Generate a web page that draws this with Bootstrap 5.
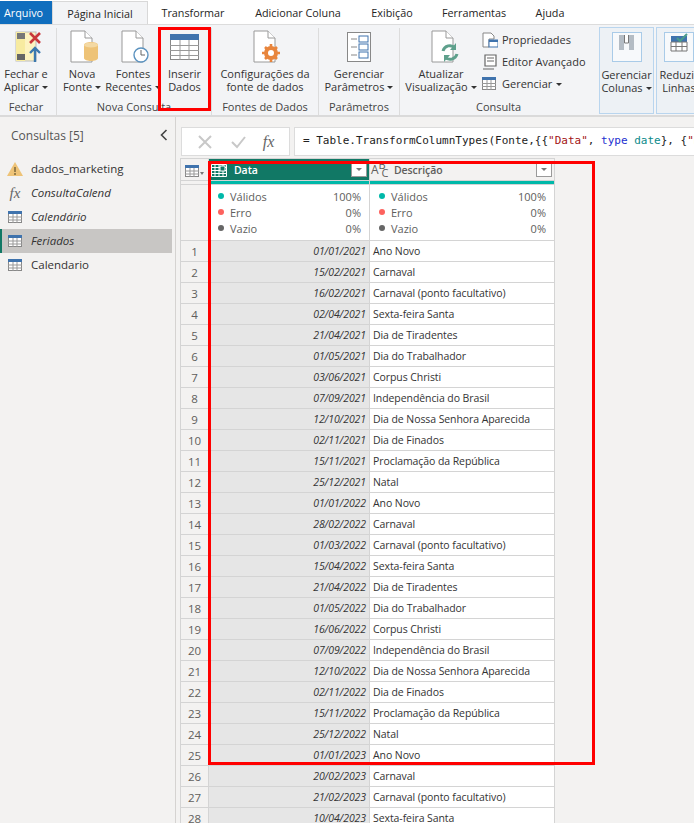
<!DOCTYPE html>
<html lang="pt"><head><meta charset="utf-8"><title>Power Query</title>
<link href="https://cdn.jsdelivr.net/npm/bootstrap@5.3.0/dist/css/bootstrap.min.css" rel="stylesheet">
<style>
html,body{height:823px;overflow:hidden}
body{width:694px;background:#f3f2f1;font-family:"Open Sans","Noto Sans",sans-serif;font-size:11px;color:#333;position:relative}
.pq-tabs{height:24px;background:#fff;align-items:stretch;font-size:10.8px;color:#252423}
.pq-tab{display:flex;align-items:center;justify-content:center;flex:none;padding-top:3px}
.pq-file{width:52px;background:#106ebe;color:#fff;margin-top:1px;padding:2px 5px 0 0}
.pq-active{width:96px;background:#f3f4f6;border:1px solid #d8d8d8;border-bottom:0;margin-top:1px;padding-top:2px}
.pq-ribbon{height:93px;background:#f3f4f6;border-top:1px solid #dcdcdc;border-bottom:2px solid #dadada;overflow:hidden;padding-top:3px}
.pq-group{flex:none;border-right:1px solid #dcdcdc;height:87px;display:flex;flex-direction:column;position:relative}
.pq-items{display:flex;flex:1;justify-content:space-around}
.pq-item{display:flex;flex-direction:column;align-items:center;text-align:center;line-height:13px;color:#333;flex:none;white-space:nowrap}
.pq-ico{height:36px;margin-top:1px;margin-bottom:2px;display:flex;align-items:center;justify-content:center}
.pq-sh{margin-left:4px}
.pq-sh2{margin-left:8px}
.pq-label{height:16px;text-align:center;color:#444;line-height:16px;white-space:nowrap;margin-top:auto}
.pq-caret{display:inline-block;border-left:3px solid transparent;border-right:3px solid transparent;border-top:3px solid #333;vertical-align:2px;margin-left:3px}
.pq-hi{flex:none;background:#edf1f5;border:1px solid #b9d5ee;margin-left:2px;height:87px;margin-top:-1px;overflow:hidden}
.pq-hi .pq-ico{margin-top:1px;margin-bottom:3px}
.pq-mini{display:flex;align-items:center;gap:4px;height:22px;color:#333;white-space:nowrap}
.pq-mini .pq-caret{margin-left:0}
.pq-main{height:706px}
.pq-side{width:176px;flex:none;border-right:1px solid #d5d3d1;position:relative}
.pq-side-head{font-size:12px;color:#555;padding:10px 0 0 11px;height:40px}
.pq-q{height:24px;display:flex;align-items:center;width:172px;font-size:11.5px;padding-left:7px;gap:8px;color:#333}
.pq-q.pq-sel{background:#c8c6c4;border-left:2px solid #117865;padding-left:5px}
.pq-q em{font-style:italic}
.pq-back{position:absolute;right:7px;top:12px}
.pq-work{flex:1;padding:10px 0 0 5px;min-width:0;overflow:hidden}
.pq-fbar{height:29px;gap:4px;margin-bottom:2px}
.pq-fbtn{width:109px;background:#fff;border:1px solid #dcdcdc;flex:none;display:flex;align-items:center;justify-content:space-around;padding:0 6px}
.pq-fx{flex:1;background:#fff;border-top:1px solid #dcdcdc;border-bottom:1px solid #dcdcdc;border-left:1px solid #dcdcdc;font-family:"DejaVu Sans Mono","Liberation Mono",monospace;font-size:11px;line-height:26px;padding-left:8px;white-space:nowrap;overflow:hidden;color:#222}
.pq-kw{color:#1c2fd0}.pq-ty{color:#0b8a8a}.pq-st{color:#a31515}
.pq-table{table-layout:fixed;border-collapse:collapse;width:374px;margin:0 0 0 -1px;background:#fff}
.pq-table td,.pq-table th{border:1px solid #d4d4d4;padding:0 3px;height:21px;line-height:19px;font-size:10.5px;letter-spacing:-.08px;font-weight:400;white-space:nowrap;overflow:hidden;color:#333}
.pq-n{background:#f3f2f1;text-align:center;color:#605e5c!important;font-size:11.5px!important;padding:0!important}
.pq-d{background:#e6e6e6;text-align:right;font-style:italic}
.pq-table thead th{height:22px;padding:0;position:relative;vertical-align:middle}
.pq-th1{background:#117865;color:#fff!important;font-weight:600!important}
.pq-th2{background:#f3f2f1;color:#605e5c!important;font-weight:600!important}
.pq-thc{display:flex;align-items:center;height:21px;gap:4px;padding-top:1px}
.pq-dd{position:absolute;right:2px;top:3px;width:16px;height:15px;background:#fff;border:1px solid #9a9a9a;display:flex;align-items:center;justify-content:center}
.pq-dd i{display:block;border-left:3px solid transparent;border-right:3px solid transparent;border-top:3px solid #777}
.pq-abc{width:19px;font-weight:400;font-size:12px;line-height:1;white-space:nowrap;margin-left:1px}
.pq-abc sup{font-size:11px;top:-.45em}.pq-abc sub{font-size:11px;bottom:-.3em;margin-left:-4px}
.pq-bar td{height:4px!important;padding:0!important;background:#00b8a9;font-size:0!important;line-height:0!important;border-top:0;border-bottom:0}
.pq-bar .pq-n0,.pq-qual .pq-n0{background:#f3f2f1}
.pq-qual td{height:56px!important;padding:0!important;vertical-align:top}
.pq-qrow{display:flex;align-items:center;height:16px;padding:0 8px;gap:6px;color:#605e5c;font-size:11px;letter-spacing:0}
.pq-qrow span:last-child{margin-left:auto}
.pq-dot{width:6px;height:6px;border-radius:50%;margin-left:1px;flex:none}
.pq-qgrid{padding-top:3px}
.pq-red{position:absolute;border:3px solid #f00;pointer-events:none}
.pq-r1{left:158px;top:27px;width:53px;height:84px}
.pq-r2{left:208px;top:161px;width:387px;height:604px}
</style></head><body>
<div class="pq-tabs d-flex">
 <div class="pq-tab pq-file">Arquivo</div>
 <div class="pq-tab pq-active">Página Inicial</div>
 <div class="pq-tab" style="width:90px">Transformar</div>
 <div class="pq-tab" style="width:120px">Adicionar Coluna</div>
 <div class="pq-tab" style="width:68px">Exibição</div>
 <div class="pq-tab" style="width:96px">Ferramentas</div>
 <div class="pq-tab" style="width:56px">Ajuda</div>
</div>
<div class="pq-ribbon d-flex">
 <div class="pq-group" style="width:57px">
  <div class="pq-items pe-1"><div class="pq-item">
   <div class="pq-ico"><svg class="pq-sh" width="28" height="32" viewBox="0 0 28 32"><rect x="2" y="1" width="20" height="29" fill="#fdf3c0" stroke="#bbb"/><rect x="2" y="1" width="9" height="29" fill="#f7eba0"/><rect x="3" y="2" width="8" height="6" fill="#777"/><rect x="3" y="23" width="8" height="6" fill="#666"/><path d="M16 2l10 10M26 2L16 12" stroke="#c8373a" stroke-width="2.6"/><path d="M21 31V18M16 22l5-5 5 5" stroke="#3b79ae" stroke-width="2.4" fill="none"/></svg></div>
   <span>Fechar e<br>Aplicar<i class="pq-caret"></i></span></div></div>
  <div class="pq-label pe-1">Fechar</div>
 </div>
 <div class="pq-group" style="width:155px">
  <div class="pq-items justify-content-start"><div class="pq-item" style="width:50px">
   <div class="pq-ico"><svg class="pq-sh" width="30" height="34" viewBox="0 0 30 34"><path d="M2 1h14l7 7v24H2z" fill="#fff" stroke="#999"/><path d="M16 1v7h7" fill="#fff" stroke="#999"/><path d="M15 15c0-4 14-4 14 0v13c0 4-14 4-14 0z" fill="#eec377"/><ellipse cx="22" cy="15" rx="7" ry="2.4" fill="#f4d9a3"/></svg></div>
   <span>Nova<br>Fonte<i class="pq-caret"></i></span></div>
   <div class="pq-item" style="width:52px">
   <div class="pq-ico"><svg class="pq-sh" width="30" height="34" viewBox="0 0 30 34"><path d="M2 1h14l7 7v24H2z" fill="#fff" stroke="#999"/><path d="M16 1v7h7" fill="#fff" stroke="#999"/><circle cx="21" cy="25" r="7" fill="#fff" stroke="#5b92bf" stroke-width="1.4"/><path d="M21 20v5h4" fill="none" stroke="#666"/></svg></div>
   <span>Fontes<br>Recentes<i class="pq-caret"></i></span></div>
   <div class="pq-item" style="width:51px">
   <div class="pq-ico"><svg width="30" height="26" viewBox="0 0 30 26"><rect x=".5" y=".5" width="28" height="25" fill="#fff" stroke="#888"/><rect y="0" width="29" height="6" fill="#3f73ad"/><path d="M0 11.5h29M0 16.5h29M0 21.5h29M10 6v20M19 6v20" stroke="#999"/></svg></div>
   <span>Inserir<br>Dados</span></div></div>
  <div class="pq-label">Nova Consulta</div>
 </div>
 <div class="pq-group" style="width:107px">
  <div class="pq-items"><div class="pq-item">
   <div class="pq-ico"><svg class="pq-sh" width="30" height="34" viewBox="0 0 30 34"><path d="M2 1h14l7 7v24H2z" fill="#fff" stroke="#999"/><path d="M16 1v7h7" fill="#fff" stroke="#999"/><circle cx="19" cy="23" r="5" fill="none" stroke="#e8853c" stroke-width="4"/><path d="M19 14v4M19 28v4M10 23h4M24 23h4M13 17l3 3M22 26l3 3M25 17l-3 3M16 26l-3 3" stroke="#e8853c" stroke-width="2.6"/></svg></div>
   <span>Configurações da<br>fonte de dados</span></div></div>
  <div class="pq-label">Fontes de Dados</div>
 </div>
 <div class="pq-group" style="width:81px">
  <div class="pq-items"><div class="pq-item">
   <div class="pq-ico"><svg width="24" height="30" viewBox="0 0 24 30"><rect x=".5" y=".5" width="23" height="29" fill="#fff" stroke="#888"/><path d="M4 7h6M4 15h6M4 23h6" stroke="#888"/><rect x="12" y="4" width="9" height="6" fill="#fff" stroke="#3f73ad"/><rect x="12" y="12" width="9" height="6" fill="#fff" stroke="#3f73ad"/><rect x="12" y="20" width="9" height="6" fill="#fff" stroke="#3f73ad"/></svg></div>
   <span>Gerenciar<br>Parâmetros<i class="pq-caret"></i></span></div></div>
  <div class="pq-label">Parâmetros</div>
 </div>
 <div class="pq-group" style="width:197px;border-right:0">
  <div class="pq-items justify-content-start"><div class="pq-item" style="width:82px">
   <div class="pq-ico"><svg class="pq-sh2" width="30" height="34" viewBox="0 0 30 34"><path d="M2 1h14l7 7v24H2z" fill="#fff" stroke="#999"/><path d="M16 1v7h7" fill="#fff" stroke="#999"/><path d="M13 21a7 7 0 0 1 12-3" fill="none" stroke="#5ea08c" stroke-width="3"/><path d="M27 24a7 7 0 0 1-12 3" fill="none" stroke="#5ea08c" stroke-width="3"/><path d="M26 13v7h-6zM14 32v-7h6z" fill="#5ea08c"/></svg></div>
   <span>Atualizar<br>Visualização<i class="pq-caret"></i></span></div>
   <div class="d-flex flex-column" style="padding-top:1px">
    <div class="pq-mini"><svg width="16" height="16" viewBox="0 0 16 16"><path d="M1 1h8l3 3v3H7v8H1z" fill="#fff" stroke="#888"/><rect x="7" y="8" width="9" height="7" fill="#fff" stroke="#3f73ad"/><rect x="7" y="8" width="9" height="2" fill="#3f73ad"/></svg>Propriedades</div>
    <div class="pq-mini"><svg width="16" height="16" viewBox="0 0 16 16"><path d="M3 1h11v11H3zM1 15h11" fill="#fff" stroke="#666" stroke-width="1.2"/><path d="M5 4h7M5 7h7" stroke="#666"/></svg>Editor Avançado</div>
    <div class="pq-mini"><svg width="16" height="14" viewBox="0 0 16 14"><rect x=".5" y=".5" width="13" height="12" fill="#fff" stroke="#888"/><rect width="14" height="3" fill="#3f73ad"/><path d="M0 6.5h14M0 9.5h14M5 3v10M9 3v10" stroke="#999"/></svg>Gerenciar<i class="pq-caret"></i></div>
   </div></div>
  <div class="pq-label">Consulta</div>
 </div>
 <div class="pq-hi pq-item" style="width:55px">
   <div class="pq-ico"><svg width="30" height="30" viewBox="0 0 30 30"><rect x=".5" y=".5" width="29" height="29" fill="#f7f9fb" stroke="#a9cbe8"/><rect x="7" y="3" width="5" height="15" fill="#b4bcc4"/><rect x="17" y="3" width="5" height="15" fill="#b4bcc4"/><path d="M12.5 3v8h4V3" fill="#fff" stroke="#777"/></svg></div>
   <span>Gerenciar<br>Colunas<i class="pq-caret"></i></span></div>
 <div class="pq-hi pq-item" style="width:46px">
   <div class="pq-ico"><svg width="30" height="30" viewBox="0 0 30 30"><rect x=".5" y=".5" width="29" height="29" fill="#f7f9fb" stroke="#a9cbe8"/><rect x="7" y="4" width="16" height="6" fill="#3f73ad"/><path d="M7 10h16v9H7zM7 14.500h16M12 10v9M18 10v9" fill="#fff" stroke="#777"/><path d="M13 6l3 3 7-7" fill="none" stroke="#4a9c8c" stroke-width="2"/></svg></div>
   <span>Reduzir<br>Linhas</span></div>
</div>
<div class="pq-main d-flex">
 <aside class="pq-side">
  <div class="pq-side-head">Consultas [5]</div>
  <svg class="pq-back" width="8" height="12" viewBox="0 0 8 12"><path d="M6.5 1L1.5 6l5 5" fill="none" stroke="#444" stroke-width="1.6"/></svg>
  <div class="pq-q"><svg width="16" height="14" viewBox="0 0 16 14"><path d="M8 0l8 14H0z" fill="#eec377"/><path d="M8 5v5M8 11v2" stroke="#6b5a32" stroke-width="1.3"/></svg>dados_marketing</div>
  <div class="pq-q"><span style="width:16px;font-family:'Liberation Serif',serif;font-style:italic;font-size:15px;color:#666;line-height:1;text-align:center">fx</span><em>ConsultaCalend</em></div>
  <div class="pq-q"><svg width="14" height="12" viewBox="0 0 14 12" style="margin:0 1px"><rect x=".5" y=".5" width="13" height="11" fill="#fff" stroke="#888"/><rect width="14" height="3" fill="#3f73ad"/><path d="M0 6h14M0 9h14M5 3v9M9 3v9" stroke="#999"/></svg><em>Calendário</em></div>
  <div class="pq-q pq-sel"><svg width="14" height="12" viewBox="0 0 14 12" style="margin:0 1px"><rect x=".5" y=".5" width="13" height="11" fill="#fff" stroke="#888"/><rect width="14" height="3" fill="#3f73ad"/><path d="M0 6h14M0 9h14M5 3v9M9 3v9" stroke="#999"/></svg><em>Feriados</em></div>
  <div class="pq-q"><svg width="14" height="12" viewBox="0 0 14 12" style="margin:0 1px"><rect x=".5" y=".5" width="13" height="11" fill="#fff" stroke="#888"/><rect width="14" height="3" fill="#3f73ad"/><path d="M0 6h14M0 9h14M5 3v9M9 3v9" stroke="#999"/></svg>Calendario</div>
 </aside>
 <main class="pq-work">
  <div class="pq-fbar d-flex">
   <div class="pq-fbtn">
    <svg width="16" height="16" viewBox="0 0 16 16"><path d="M2 2l12 12M14 2L2 14" stroke="#c8c8c8" stroke-width="2"/></svg>
    <svg width="16" height="14" viewBox="0 0 16 14"><path d="M2 7l5 5 8-10" fill="none" stroke="#c8c8c8" stroke-width="2"/></svg>
    <span style="font-family:'Liberation Serif',serif;font-style:italic;font-size:16px;color:#666">fx</span>
   </div>
   <div class="pq-fx">= Table.TransformColumnTypes(Fonte,{{<span class="pq-st">"Data"</span>, <span class="pq-kw">type</span> <span class="pq-ty">date</span>}, {<span class="pq-st">"Descrição"</span>, <span class="pq-kw">type</span> <span class="pq-ty">text</span>}})</div>
  </div>
  <table class="pq-table">
   <colgroup><col style="width:28px"><col style="width:161px"><col style="width:185px"></colgroup>
   <thead><tr>
    <th class="pq-n"><svg width="20" height="12" viewBox="0 0 20 12"><rect x=".5" y=".5" width="13" height="11" fill="#fff" stroke="#888"/><rect width="14" height="3" fill="#3f73ad"/><path d="M0 6h14M0 9h14M5 3v9M9 3v9" stroke="#999"/><path d="M15 7h4l-2 3z" fill="#777"/></svg></th>
    <th class="pq-th1"><div class="pq-thc"><svg width="16" height="13" viewBox="0 0 16 13" style="margin-left:2px"><path d="M.5.5h15v12H.5zM.5 3.500h15M.5 6.500h15M.5 9.500h15M4 .5v12M8 .5v12M12 .5v12" fill="none" stroke="#fff"/><rect x="9" y="2" width="5" height="5" fill="#117865" stroke="#fff"/></svg><span style="margin-left:3px">Data</span></div><span class="pq-dd"><i></i></span></th>
    <th class="pq-th2"><div class="pq-thc"><span class="pq-abc">A<sup>B</sup><sub>C</sub></span><span>Descrição</span></div><span class="pq-dd"><i></i></span></th>
   </tr></thead>
   <tbody>
    <tr class="pq-bar"><td class="pq-n0"></td><td></td><td></td></tr>
    <tr class="pq-qual"><td class="pq-n0"></td>
     <td><div class="pq-qgrid"><div class="pq-qrow"><i class="pq-dot" style="background:#00b8a9"></i><span>Válidos</span><span>100%</span></div><div class="pq-qrow"><i class="pq-dot" style="background:#fd625e"></i><span>Erro</span><span>0%</span></div><div class="pq-qrow"><i class="pq-dot" style="background:#666"></i><span>Vazio</span><span>0%</span></div></div></td>
     <td><div class="pq-qgrid"><div class="pq-qrow"><i class="pq-dot" style="background:#00b8a9"></i><span>Válidos</span><span>100%</span></div><div class="pq-qrow"><i class="pq-dot" style="background:#fd625e"></i><span>Erro</span><span>0%</span></div><div class="pq-qrow"><i class="pq-dot" style="background:#666"></i><span>Vazio</span><span>0%</span></div></div></td></tr>
    <tr><td class="pq-n">1</td><td class="pq-d">01/01/2021</td><td>Ano Novo</td></tr>
    <tr><td class="pq-n">2</td><td class="pq-d">15/02/2021</td><td>Carnaval</td></tr>
    <tr><td class="pq-n">3</td><td class="pq-d">16/02/2021</td><td>Carnaval (ponto facultativo)</td></tr>
    <tr><td class="pq-n">4</td><td class="pq-d">02/04/2021</td><td>Sexta-feira Santa</td></tr>
    <tr><td class="pq-n">5</td><td class="pq-d">21/04/2021</td><td>Dia de Tiradentes</td></tr>
    <tr><td class="pq-n">6</td><td class="pq-d">01/05/2021</td><td>Dia do Trabalhador</td></tr>
    <tr><td class="pq-n">7</td><td class="pq-d">03/06/2021</td><td>Corpus Christi</td></tr>
    <tr><td class="pq-n">8</td><td class="pq-d">07/09/2021</td><td>Independência do Brasil</td></tr>
    <tr><td class="pq-n">9</td><td class="pq-d">12/10/2021</td><td>Dia de Nossa Senhora Aparecida</td></tr>
    <tr><td class="pq-n">10</td><td class="pq-d">02/11/2021</td><td>Dia de Finados</td></tr>
    <tr><td class="pq-n">11</td><td class="pq-d">15/11/2021</td><td>Proclamação da República</td></tr>
    <tr><td class="pq-n">12</td><td class="pq-d">25/12/2021</td><td>Natal</td></tr>
    <tr><td class="pq-n">13</td><td class="pq-d">01/01/2022</td><td>Ano Novo</td></tr>
    <tr><td class="pq-n">14</td><td class="pq-d">28/02/2022</td><td>Carnaval</td></tr>
    <tr><td class="pq-n">15</td><td class="pq-d">01/03/2022</td><td>Carnaval (ponto facultativo)</td></tr>
    <tr><td class="pq-n">16</td><td class="pq-d">15/04/2022</td><td>Sexta-feira Santa</td></tr>
    <tr><td class="pq-n">17</td><td class="pq-d">21/04/2022</td><td>Dia de Tiradentes</td></tr>
    <tr><td class="pq-n">18</td><td class="pq-d">01/05/2022</td><td>Dia do Trabalhador</td></tr>
    <tr><td class="pq-n">19</td><td class="pq-d">16/06/2022</td><td>Corpus Christi</td></tr>
    <tr><td class="pq-n">20</td><td class="pq-d">07/09/2022</td><td>Independência do Brasil</td></tr>
    <tr><td class="pq-n">21</td><td class="pq-d">12/10/2022</td><td>Dia de Nossa Senhora Aparecida</td></tr>
    <tr><td class="pq-n">22</td><td class="pq-d">02/11/2022</td><td>Dia de Finados</td></tr>
    <tr><td class="pq-n">23</td><td class="pq-d">15/11/2022</td><td>Proclamação da República</td></tr>
    <tr><td class="pq-n">24</td><td class="pq-d">25/12/2022</td><td>Natal</td></tr>
    <tr><td class="pq-n">25</td><td class="pq-d">01/01/2023</td><td>Ano Novo</td></tr>
    <tr><td class="pq-n">26</td><td class="pq-d">20/02/2023</td><td>Carnaval</td></tr>
    <tr><td class="pq-n">27</td><td class="pq-d">21/02/2023</td><td>Carnaval (ponto facultativo)</td></tr>
    <tr><td class="pq-n">28</td><td class="pq-d">10/04/2023</td><td>Sexta-feira Santa</td></tr>
   </tbody>
  </table>
 </main>
</div>
<div class="pq-red pq-r1"></div>
<div class="pq-red pq-r2"></div>
<script src="https://cdn.jsdelivr.net/npm/bootstrap@5.3.0/dist/js/bootstrap.bundle.min.js"></script>
</body></html>
